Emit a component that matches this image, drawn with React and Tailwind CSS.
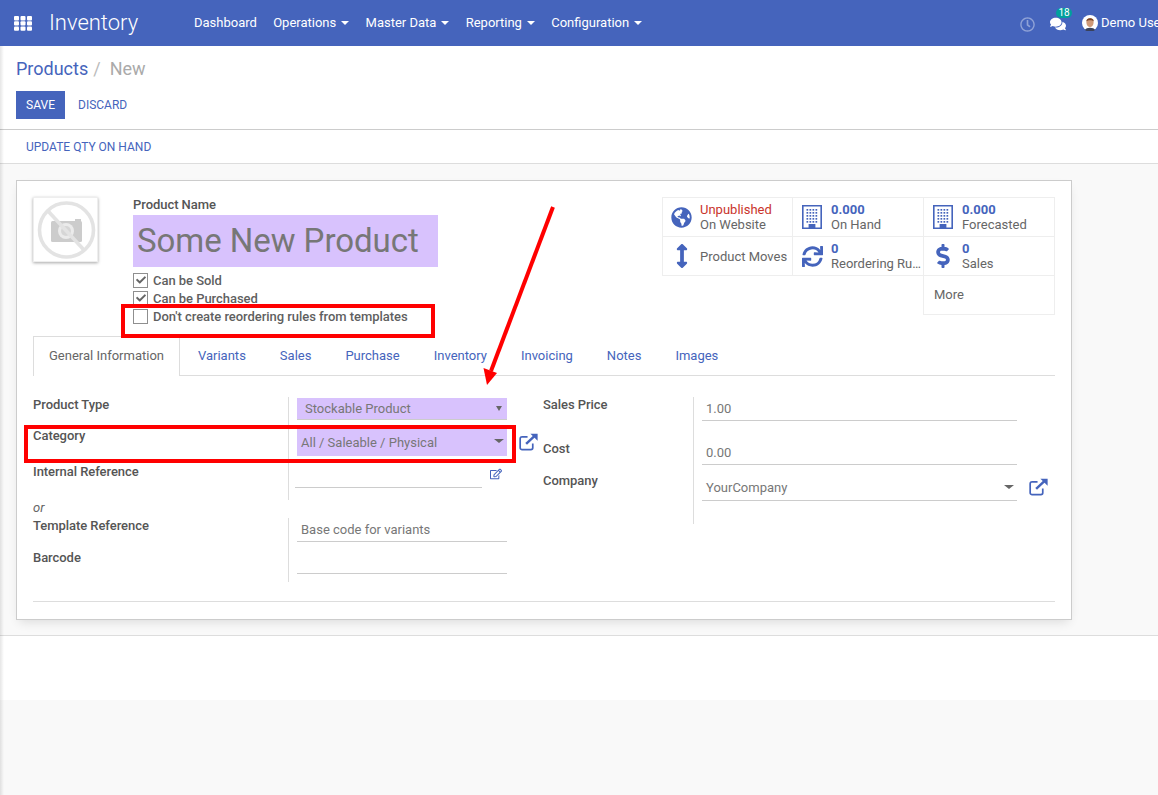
import React from 'react';
import { FaGlobeAmericas, FaArrowsAltV, FaSync, FaDollarSign, FaRegEdit, FaCheck, FaComments, FaRegClock } from 'react-icons/fa';

const Caret = ({ className = 'border-t-white border-x-[4px] border-t-[4px]' }) => (
  <span className={`inline-block w-0 h-0 border-x-transparent ${className}`} />
);

const AppsIcon = () => (
  <svg width="18" height="15" viewBox="0 0 18 15" fill="#fff">
    {[0, 6.5, 13].map((x) =>
      [0, 5.2, 10.4].map((y) => <rect key={`${x}-${y}`} x={x} y={y} width="5" height="4.4" rx="1" />)
    )}
  </svg>
);

const LinkIcon = () => (
  <svg width="19" height="18" viewBox="0 0 20 19" fill="none" stroke="#4564bc">
    <path d="M9 4H3.5A2 2 0 0 0 1.2 6v9.5a2 2 0 0 0 2.3 2h9a2 2 0 0 0 2-2V11" strokeWidth="1.8" />
    <path d="M7.5 11.5 16.5 3" strokeWidth="2.6" />
    <path d="M12 .8h7.6v7.4z" fill="#4564bc" stroke="none" />
  </svg>
);

const BuildingIcon = () => (
  <svg width="20" height="24" viewBox="0 0 20 24" fill="#4564bc">
    <path fillRule="evenodd" d="M0 0h20v24H0zM1.6 1.6v20.8h5v-3.4h6.8v3.4h5V1.6z" />
    {[4.5, 7.5, 10.5, 13.5].map((x) =>
      [4, 7, 10, 13, 16].map((y) => <rect key={`${x}-${y}`} x={x} y={y} width="1.7" height="1.7" />)
    )}
  </svg>
);

const Avatar = () => (
  <svg width="16" height="16" viewBox="0 0 16 16">
    <circle cx="8" cy="8" r="8" fill="#fff" />
    <path d="M3 15c1-3 9-3 10 0a8 8 0 0 1-10 0z" fill="#39415a" />
    <ellipse cx="8" cy="7.5" rx="3.6" ry="4.6" fill="#d09a78" />
    <path d="M4.3 6.5C4 2.5 12 1.8 11.8 6.5 10.5 4.8 6 4.6 4.3 6.5z" fill="#7a4526" />
  </svg>
);

const NoImage = () => (
  <svg width="64" height="64" viewBox="0 0 64 64">
    <rect x="17" y="23" width="31" height="21" rx="1.5" fill="#ccc" />
    <rect x="41" y="21" width="6" height="3" fill="#ccc" />
    <circle cx="32" cy="33" r="8" fill="#ebebeb" />
    <circle cx="32" cy="33" r="5" fill="#d6d6d6" />
    <circle cx="32.5" cy="32" r="27" fill="none" stroke="#e3e3e3" strokeWidth="3.6" />
    <path d="M14 13 50 52" stroke="#e3e3e3" strokeWidth="3.6" />
  </svg>
);

const Check = ({ checked, label }) => (
  <div className="flex items-center h-[18px]">
    <span className="w-[15px] h-[15px] border border-[#8f8f8f] bg-white flex items-center justify-center mr-[5px]">
      {checked && <FaCheck className="text-[#666] text-[10px]" />}
    </span>
    <span className="text-[13px] font-medium text-[#5f5f5f] tracking-[-0.045px] pt-px">{label}</span>
  </div>
);

// first column cells carry the left border, so their icon slot is 1px narrower
const Stat = ({ icon, top, bottom, first, topClass = 'text-[#4564bc] font-bold' }) => (
  <div className={`flex items-center h-[39px] border-r border-b border-[#eee] min-w-0 ${first ? 'border-l' : ''}`}>
    <span className={`${first ? 'w-[37px]' : 'w-[38px]'} shrink-0 flex justify-center text-[#4564bc]`}>{icon}</span>
    <div className="text-[13px] leading-[15px] text-[#666] min-w-0">
      {top && <div className={topClass}>{top}</div>}
      <div className="truncate">{bottom}</div>
    </div>
  </div>
);

const tabs = ['Variants', 'Sales', 'Purchase', 'Inventory', 'Invoicing', 'Notes', 'Images'];

const Label = ({ children }) => (
  <div className="text-[13px] leading-[15px] font-medium text-[#555] tracking-[-0.05px]">{children}</div>
);

export default function App() {
  return (
    <div className="relative h-screen overflow-hidden flex flex-col bg-[#f9f9f9] text-[13px] text-[#666] font-['Roboto',sans-serif]">
      {/* navbar */}
      <div className="h-[46px] shrink-0 bg-[#4564bc] flex items-center text-white whitespace-nowrap overflow-hidden">
        <div className="ml-[14px] w-[35px] shrink-0 flex"><AppsIcon /></div>
        <div className="w-[145px] shrink-0 text-[22px] font-light -mt-[2px]">Inventory</div>
        <div className="w-[825px] shrink-0 flex items-center gap-[16.3px]">
          <span>Dashboard</span>
          <span className="flex items-center gap-[5px]">Operations <Caret /></span>
          <span className="flex items-center gap-[5px]">Master Data <Caret /></span>
          <span className="flex items-center gap-[5px]">Reporting <Caret /></span>
          <span className="flex items-center gap-[5px]">Configuration <Caret /></span>
        </div>
        <div className="shrink-0 flex items-center">
          <FaRegClock className="ml-px text-[15px] text-white/40 mt-[2px]" />
          <div className="relative ml-[15px] mr-[16px] mt-[2px]">
            <FaComments className="text-[16px]" />
            <span className="absolute -top-[8px] left-[6px] h-[10px] w-[16px] rounded-full bg-[#00a09d] text-[10px] leading-[10px] text-center">18</span>
          </div>
          <Avatar />
          <span className="ml-[3px]">Demo User</span>
        </div>
      </div>

      {/* control panel */}
      <div className="h-[84px] shrink-0 bg-white border-b border-[#ccc] pl-4">
        <div className="pt-[11px] text-[18px] leading-[24px] flex">
          <span className="text-[#4564bc]">Products</span>
          <span className="text-[#bbb] ml-[5px]">/</span>
          <span className="text-[#aaa] ml-[9px]">New</span>
        </div>
        <div className="mt-[10px] flex items-center text-[12px]">
          <button className="h-[28px] w-[49px] bg-[#4564bc] text-white">SAVE</button>
          <button className="ml-[13px] text-[#4564bc]">DISCARD</button>
        </div>
      </div>

      {/* statusbar */}
      <div className="h-[34px] shrink-0 bg-white border-b border-[#ddd] pl-[26px] flex items-center text-[12px] text-[#4564bc]">
        UPDATE QTY ON HAND
      </div>

      {/* sheet */}
      <div className="h-[472px] shrink-0 border-b border-[#ddd] pt-4 pl-4">
        <div className="w-[1056px] h-[440px] bg-white border border-[#ccc] shadow-[0_5px_10px_-3px_rgba(0,0,0,0.12)] px-4 pt-4">
          <div className="h-[139px] flex">
            <div className="w-[100px] shrink-0">
              <div className="w-[65px] h-[65px] border border-[#eee] shadow-[0_1px_3px_rgba(0,0,0,0.35)] bg-white">
                <NoImage />
              </div>
            </div>
            <div className="w-[529px] shrink-0">
              <Label>Product Name</Label>
              <div className="mt-[3px] w-[305px] h-[52px] bg-[#d8c2fd] pl-[4px] flex items-center text-[33px] text-[#777] tracking-[-0.05px]">
                Some New Product
              </div>
              <div className="mt-[4px]">
                <Check checked label="Can be Sold" />
                <Check checked label="Can be Purchased" />
                <Check label="Don't create reordering rules from templates" />
              </div>
            </div>
            <div className="w-[394px] h-[118px] grid grid-cols-3 border-t border-[#eee] self-start">
              <Stat first icon={<FaGlobeAmericas className="text-[21px]" />} top="Unpublished" topClass="text-[#c9342c]" bottom="On Website" />
              <Stat icon={<BuildingIcon />} top="0.000" bottom="On Hand" />
              <Stat icon={<BuildingIcon />} top="0.000" bottom="Forecasted" />
              <Stat first icon={<FaArrowsAltV className="text-[24px]" />} bottom="Product Moves" />
              <Stat icon={<FaSync className="text-[21px]" />} top="0" bottom="Reordering Rules" />
              <Stat icon={<FaDollarSign className="text-[24px]" />} top="0" bottom="Sales" />
              <div className="col-start-3 h-[39px] border-l border-r border-b border-[#eee] -ml-px pl-[10px] flex items-center">More</div>
            </div>
          </div>

          {/* tabs */}
          <div className="h-[40px] flex border-b border-[#ddd] text-[#4564bc]">
            <div className="h-[40px] w-[147px] border border-b-0 border-[#ddd] bg-white flex items-center justify-center text-[#666] pb-[2px]">General Information</div>
            <div className="flex items-center pl-[18px] gap-[34px]">
              {tabs.map((t) => <span key={t}>{t}</span>)}
            </div>
          </div>

          {/* form */}
          <div className="mt-[21px] h-[205px] flex border-b border-[#ddd]">
            <div className="w-[510px] shrink-0">
              <div className="flex h-[31px]">
                <div className="w-[255px]"><Label>Product Type</Label></div>
                <div className="border-l border-[#ddd] pl-2">
                  <div className="mt-px w-[210px] h-[22px] bg-[#d8c2fd] border-b border-[#ccc] pl-2 pr-[5px] flex items-center justify-between text-[#777]">
                    Stockable Product <Caret className="border-t-[#666] border-x-[3.5px] border-t-[5px]" />
                  </div>
                </div>
              </div>
              <div className="flex h-[36px]">
                <div className="w-[255px]"><Label>Category</Label></div>
                <div className="border-l border-[#ddd] pl-2 flex items-start">
                  <div className="mt-px w-[210px] h-[27px] bg-[#d8c2fd] pl-1 pr-[3px] flex items-center justify-between text-[#777]">
                    All / Saleable / Physical <span className="flex -mt-[3px]"><Caret className="border-t-[#666] border-x-[5px] border-t-[4px]" /></span>
                  </div>
                  <span className="ml-3 mt-[5px]"><LinkIcon /></span>
                </div>
              </div>
              <div className="flex h-[36px]">
                <div className="w-[255px]"><Label>Internal Reference</Label></div>
                <div className="border-l border-[#ddd] pl-[6px] flex items-start">
                  <div className="w-[187px] h-[24px] border-b border-[#ccc]" />
                  <FaRegEdit className="ml-2 mt-[4px] text-[12px] text-[#4564bc]" />
                </div>
              </div>
              <div className="h-[18px] italic text-[#666] flex items-center pb-[2px]">or</div>
              <div className="flex h-[32px]">
                <div className="w-[255px]"><Label>Template Reference</Label></div>
                <div className="border-l border-[#ddd] pl-2">
                  <div className="w-[210px] h-[24px] border-b border-[#ccc] pl-1 flex items-center text-[#777]">Base code for variants</div>
                </div>
              </div>
              <div className="flex h-[32px]">
                <div className="w-[255px]"><Label>Barcode</Label></div>
                <div className="border-l border-[#ddd] pl-2">
                  <div className="w-[210px] h-[24px] border-b border-[#ccc]" />
                </div>
              </div>
            </div>

            <div>
              <div className="flex h-[44px]">
                <div className="w-[150px]"><Label>Sales Price</Label></div>
                <div className="border-l border-[#ddd] pl-2">
                  <div className="w-[315px] h-[24px] border-b border-[#ccc] pl-1 flex items-center text-[#777]">1.00</div>
                </div>
              </div>
              <div className="flex h-[32px]">
                <div className="w-[150px]"><Label>Cost</Label></div>
                <div className="border-l border-[#ddd] pl-2">
                  <div className="w-[315px] h-[24px] border-b border-[#ccc] pl-1 flex items-center text-[#777]">0.00</div>
                </div>
              </div>
              <div className="flex h-[51px]">
                <div className="w-[150px]"><Label>Company</Label></div>
                <div className="border-l border-[#ddd] pl-2 flex items-start">
                  <div className="w-[315px] h-[28px] border-b border-[#ccc] pl-1 pr-[3px] pt-[2px] flex items-center justify-between text-[#777]">
                    YourCompany <span className="flex -mt-[2px]"><Caret className="border-t-[#666] border-x-[5px] border-t-[4px]" /></span>
                  </div>
                  <span className="ml-3 mt-[5px]"><LinkIcon /></span>
                </div>
              </div>
            </div>
          </div>
        </div>
      </div>

      <div className="h-[64px] shrink-0 bg-white" />

      {/* left edge shadow */}
      <div className="absolute left-0 top-[46px] bottom-0 w-[4px] bg-linear-to-r from-black/10 to-transparent" />

      {/* red annotations */}
      <div className="absolute left-[121px] top-[304px] w-[314px] h-[34px] border-[4px] border-[#f00]" />
      <div className="absolute left-[24px] top-[425px] w-[492px] h-[38px] border-[4px] border-[#f00]" />
      <svg className="absolute left-0 top-0" width="1158" height="795" fill="none">
        <path d="M553 207 491 371" stroke="#f00" strokeWidth="4" />
        <path d="M487 385 483.5 368 497 373z" fill="#f00" />
      </svg>
    </div>
  );
}
